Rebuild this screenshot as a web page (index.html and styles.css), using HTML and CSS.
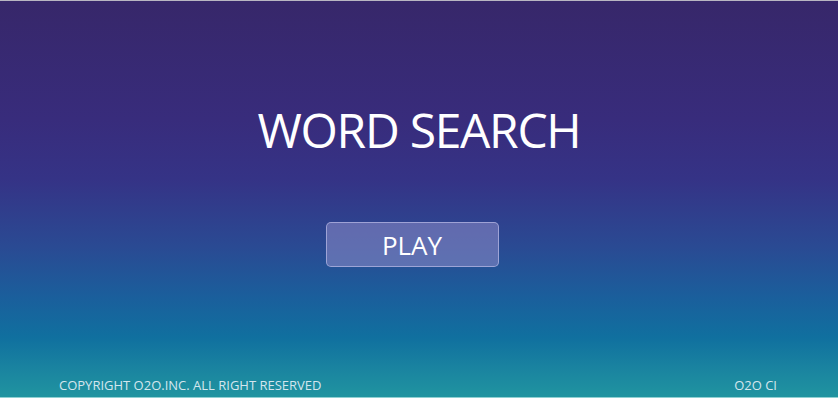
FILE: index.html
```html
<!DOCTYPE html>
<html>
<head>
<meta charset="utf-8">
<link rel="stylesheet" href="styles.css">
</head>
<body>
<div class="screen">
  <main class="center">
    <h1 class="title">WORD SEARCH</h1>
    <button class="play">PLAY</button>
  </main>
  <footer class="footer">
    <span>COPYRIGHT O2O.INC. ALL RIGHT RESERVED</span>
    <span>O2O CI</span>
  </footer>
</div>
</body>
</html>
```
FILE: styles.css
```css
html, body { margin: 0; padding: 0; }
body { width: 838px; height: 398px; overflow: hidden; font-family: "Open Sans", "Liberation Sans", sans-serif; }
.screen {
  box-sizing: border-box;
  width: 838px; height: 398px;
  border-top: 1px solid #b9b6c2;
  border-bottom: 1px solid #8fd0d2;
  background: linear-gradient(to bottom, #37276a 0%, #382c7c 30%, #353386 45%, #2a4a93 62%, #1a5f9c 75%, #10709f 85%, #1a84a0 93%, #2094a0 100%);
  display: flex; flex-direction: column;
}
.center { flex: 1; display: flex; flex-direction: column; align-items: center; }
.title {
  margin: 99px 0 0; font-weight: 400; font-size: 48px; color: #fff; letter-spacing: -1.3px; line-height: 60px;
}
.play {
  margin: 62px 14px 0 0; width: 173px; height: 45px; box-sizing: border-box;
  background: rgba(150, 145, 205, 0.5);
  border: 1px solid rgba(200, 200, 240, 0.6);
  border-radius: 5px;
  color: #fff; font-family: inherit; font-size: 26px; line-height: 1; padding: 0;
}
.footer {
  display: flex; justify-content: space-between; padding: 0 61px 4px 59px;
  color: #d4e6ee; font-size: 13px; line-height: 16px;
}
```
